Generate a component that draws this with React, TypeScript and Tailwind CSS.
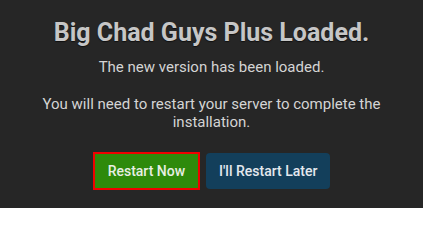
import React from 'react';

const App: React.FC = () => {
  return (
    <div className="w-[423px] h-[208px] bg-[#262626] flex flex-col items-center pt-[18px] font-['Roboto',sans-serif] text-center">
      <h1 className="text-[25px] leading-[30px] font-bold text-[#c6c6c6] [text-shadow:0_1px_1px_rgba(0,0,0,0.6)]">
        Big Chad Guys Plus Loaded.
      </h1>
      <p className="mt-[10px] text-[15px] leading-[18px] text-[#d4d4d4]">
        The new version has been loaded.
      </p>
      <p className="mt-[19px] w-[380px] text-[15px] leading-[18px] text-[#d4d4d4]">
        You will need to restart your server to complete the installation.
      </p>
      <div className="mt-[21px] flex items-center gap-[6px]">
        <button className="h-[38px] px-[13px] border-2 border-[#f00000] bg-[#2e8a0b] text-[14px] font-medium text-[#e8efe4]">
          Restart Now
        </button>
        <button className="h-[36px] px-[13px] rounded-[4px] bg-[#133f5b] text-[14px] font-medium text-[#e4e8ee]">
          I'll Restart Later
        </button>
      </div>
    </div>
  );
};

export default App;
